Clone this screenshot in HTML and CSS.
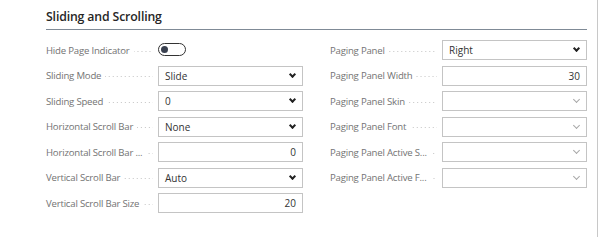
FILE: index.html
```html
<!DOCTYPE html>
<html>
  <head>
    <meta name="viewport" content="width=device-width, initial-scale=1" />
    <link rel="stylesheet" href="styles.css">
  </head>
  <body>
    <div class="panel">
      <h2 class="section-title">Sliding and Scrolling</h2>

      <div class="fields">
        <div class="column">
          <div class="field">
            <label class="caption"><span class="caption-text">Hide Page Indicator</span><span class="leader"></span></label>
            <div class="control">
              <span class="toggle"><span class="knob"></span></span>
            </div>
          </div>
          <div class="field">
            <label class="caption"><span class="caption-text">Sliding Mode</span><span class="leader"></span></label>
            <div class="control box select">Slide<span class="chevron"></span></div>
          </div>
          <div class="field">
            <label class="caption"><span class="caption-text">Sliding Speed</span><span class="leader"></span></label>
            <div class="control box select">0<span class="chevron"></span></div>
          </div>
          <div class="field">
            <label class="caption"><span class="caption-text">Horizontal Scroll Bar</span><span class="leader"></span></label>
            <div class="control box select">None<span class="chevron"></span></div>
          </div>
          <div class="field">
            <label class="caption" title="Horizontal Scroll Bar Size"><span class="caption-text">Horizontal Scroll Bar ...</span><span class="leader"></span></label>
            <div class="control box number">0</div>
          </div>
          <div class="field">
            <label class="caption"><span class="caption-text">Vertical Scroll Bar</span><span class="leader"></span></label>
            <div class="control box select">Auto<span class="chevron"></span></div>
          </div>
          <div class="field">
            <label class="caption"><span class="caption-text">Vertical Scroll Bar Size</span><span class="leader"></span></label>
            <div class="control box number">20</div>
          </div>
        </div>

        <div class="column">
          <div class="field">
            <label class="caption"><span class="caption-text">Paging Panel</span><span class="leader"></span></label>
            <div class="control box select">Right<span class="chevron"></span></div>
          </div>
          <div class="field">
            <label class="caption"><span class="caption-text">Paging Panel Width</span><span class="leader"></span></label>
            <div class="control box number">30</div>
          </div>
          <div class="field">
            <label class="caption"><span class="caption-text">Paging Panel Skin</span><span class="leader"></span></label>
            <div class="control box select empty"><span class="chevron light"></span></div>
          </div>
          <div class="field">
            <label class="caption"><span class="caption-text">Paging Panel Font</span><span class="leader"></span></label>
            <div class="control box select empty"><span class="chevron light"></span></div>
          </div>
          <div class="field">
            <label class="caption" title="Paging Panel Active Skin"><span class="caption-text">Paging Panel Active S...</span><span class="leader"></span></label>
            <div class="control box select empty"><span class="chevron light"></span></div>
          </div>
          <div class="field">
            <label class="caption" title="Paging Panel Active Font"><span class="caption-text">Paging Panel Active F...</span><span class="leader"></span></label>
            <div class="control box select empty"><span class="chevron light"></span></div>
          </div>
        </div>
      </div>
    </div>
  </body>
</html>
```

FILE: styles.css
```css
* {
  box-sizing: border-box;
}

body {
  margin: 0;
  font-family: "Segoe UI", "Open Sans", "Noto Sans", Arial, sans-serif;
  background-color: white;
}

/* Page area with the light line on the right */
.panel {
  width: 598px;
  height: 237px;
  padding: 0 10px 0 46px;
  border-right: 1px solid #c8c8c8;
}

.section-title {
  margin: 0;
  padding-top: 8px;
  height: 30px;
  font-size: 12.3px;
  font-weight: 600;
  letter-spacing: -0.15px;
  color: #262626;
  border-bottom: 1px solid #7f8a96;
}

/* Two columns of fields */
.fields {
  display: grid;
  grid-template-columns: 257px 257px;
  column-gap: 27px;
  padding-top: 10px;
}

.column {
  display: flex;
  flex-direction: column;
  gap: 5.5px;
}

.field {
  display: flex;
  align-items: center;
  height: 20px;
}

.caption {
  display: flex;
  align-items: center;
  width: 112px;
  padding-right: 5px;
  font-size: 9.6px;
  color: #737373;
}

.caption-text {
  white-space: nowrap;
  letter-spacing: -0.2px;
}

/* Dotted leader after the caption */
.leader {
  flex: 1;
  min-width: 5px;
  height: 1px;
  margin: 2px 0 0 4px;
  background-image: linear-gradient(to right, #c4c4c4 1px, transparent 1px);
  background-size: 4px 1px;
  background-position: right center;
  background-repeat: repeat-x;
}

.control {
  width: 145px;
  height: 20px;
}

.box {
  display: flex;
  align-items: center;
  padding: 0 6px;
  border: 1px solid #c4c4c4;
  font-size: 10px;
  color: #333;
}

.select {
  justify-content: space-between;
}

.select.empty {
  justify-content: flex-end;
}

.number {
  justify-content: flex-end;
}

/* Chevron for the dropdowns */
.chevron {
  width: 5px;
  height: 5px;
  margin-right: 1px;
  margin-bottom: 3px;
  border-right: 2px solid #222;
  border-bottom: 2px solid #222;
  transform: rotate(45deg);
}

.chevron.light {
  border-right: 1px solid #a8a8a8;
  border-bottom: 1px solid #a8a8a8;
}

/* Toggle switch */
.control .toggle {
  display: flex;
  align-items: center;
  width: 28px;
  height: 13px;
  margin-top: 3px;
  padding-left: 2px;
  border: 1px solid #333;
  border-radius: 7px;
}

.knob {
  width: 7px;
  height: 7px;
  border-radius: 50%;
  background-color: #3a4150;
}
```
